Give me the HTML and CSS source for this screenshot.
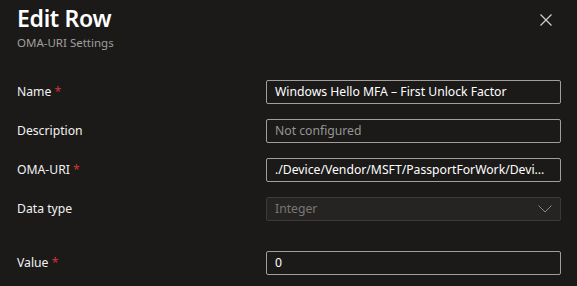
FILE: index.html
```html
<!DOCTYPE html>
<html lang="en">
<head>
<meta charset="utf-8">
<title>Edit Row</title>
<link rel="stylesheet" href="styles.css">
</head>
<body>
<div class="panel">
  <header class="header">
    <div class="titles">
      <h1 class="title">Edit Row</h1>
      <div class="subtitle">OMA-URI Settings</div>
    </div>
    <button class="close" aria-label="Close">
      <svg width="12" height="12" viewBox="0 0 12 12"><path d="M0.5 0.5 L11.5 11.5 M11.5 0.5 L0.5 11.5" stroke="#d2d0ce" stroke-width="1.2" fill="none"/></svg>
    </button>
  </header>
  <form class="form">
    <label class="label">Name <span class="req">*</span></label>
    <div class="field">Windows Hello MFA – First Unlock Factor</div>

    <label class="label">Description</label>
    <div class="field placeholder">Not configured</div>

    <label class="label">OMA-URI <span class="req">*</span></label>
    <div class="field">./Device/Vendor/MSFT/PassportForWork/Devi...</div>

    <label class="label">Data type</label>
    <div class="field disabled">
      <span>Integer</span>
      <svg class="chev" width="14" height="8" viewBox="0 0 14 8"><path d="M0.5 0.5 L7 7 L13.5 0.5" stroke="#8a8886" stroke-width="1" fill="none"/></svg>
    </div>

    <label class="label last">Value <span class="req">*</span></label>
    <div class="field last">0</div>
  </form>
</div>
</body>
</html>
```
FILE: styles.css
```css
html, body {
  margin: 0;
  padding: 0;
  background: #1b1a19;
  font-family: "Noto Sans", "Open Sans", sans-serif;
  color: #ffffff;
}
.panel {
  padding: 0 16px 0 17px;
}
.header {
  display: flex;
  justify-content: space-between;
  align-items: flex-start;
  height: 80px;
}
.titles {
  padding-top: 3px;
}
.title {
  margin: 0;
  font-size: 23px;
  line-height: 30px;
  font-weight: 600;
  letter-spacing: -0.3px;
  color: #ffffff;
}
.subtitle {
  font-size: 11.5px;
  line-height: 16px;
  color: #a19f9d;
  margin-top: 2px;
}
.close {
  background: none;
  border: none;
  padding: 0;
  margin: 14px 9px 0 0;
  width: 12px;
  height: 12px;
  display: flex;
}
.form {
  display: grid;
  grid-template-columns: 249px 295px;
  grid-template-rows: repeat(4, 24px) 39px;
  row-gap: 15px;
  align-items: center;
}
.label {
  font-size: 12.2px;
  line-height: 24px;
  color: #f3f2f1;
}
.req {
  color: #d13438;
}
.field {
  box-sizing: border-box;
  height: 24px;
  border: 1px solid #a19f9d;
  border-radius: 2px;
  padding: 0 8px;
  font-size: 12.2px;
  line-height: 22px;
  color: #ffffff;
  white-space: nowrap;
  overflow: hidden;
}
.last {
  align-self: end;
}
.placeholder {
  color: #979593;
}
.disabled {
  display: flex;
  justify-content: space-between;
  align-items: center;
  background: #252423;
  border-color: #3b3a39;
  color: #797775;
  padding-right: 8px;
}
.chev {
  display: block;
}
```
